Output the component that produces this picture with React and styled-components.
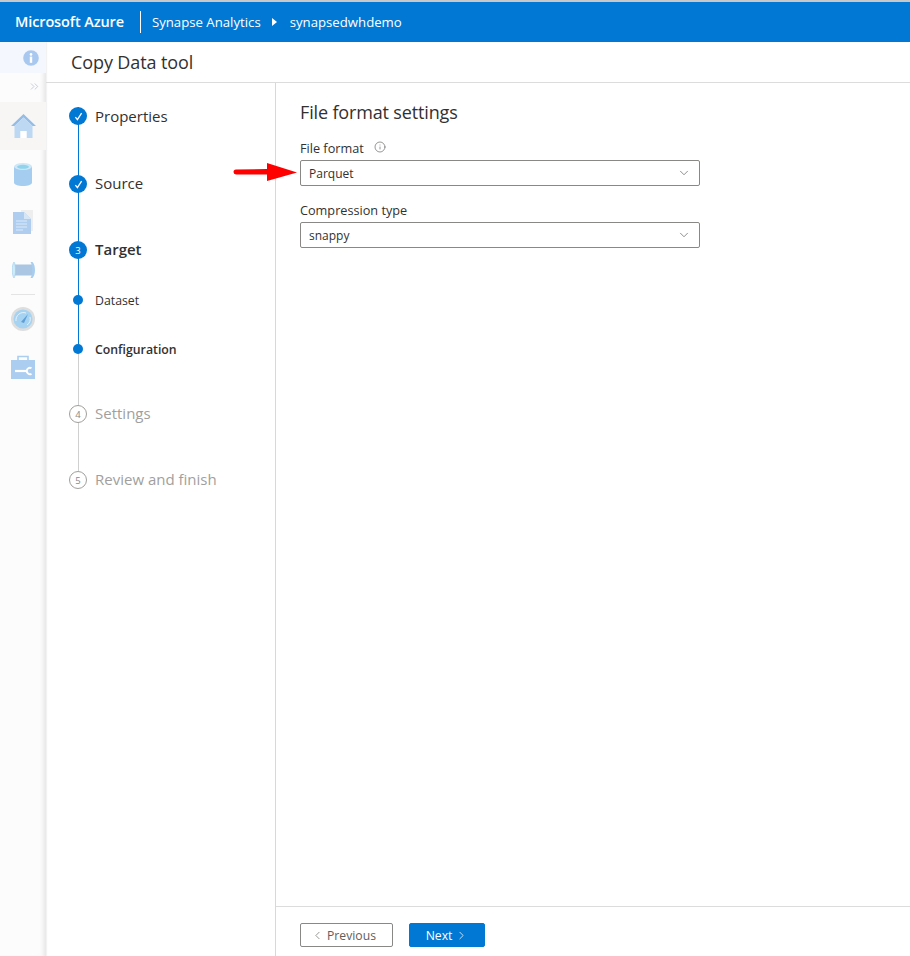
import React from 'react'
import styled, { createGlobalStyle } from 'styled-components'
import { ChevronDown, ChevronLeft, ChevronRight, ChevronsRight, Info } from 'lucide-react'

const GlobalStyle = createGlobalStyle`
    html, body {
        margin: 0;
        padding: 0;
        background: #fff;
    }
    body {
        font-family: "Open Sans", "Noto Sans", "Liberation Sans", sans-serif;
        color: #323130;
    }
    * { box-sizing: border-box; }
`

const Page = styled.div`
    width: 910px;
    height: 956px;
    display: flex;
    flex-direction: column;
    overflow: hidden;
    position: relative;
    border-top: 2px solid #c8c8c8;
`

const TopBar = styled.header`
    height: 40px;
    flex: none;
    background: #0078d4;
    color: #fff;
    display: flex;
    align-items: center;
    padding-left: 15px;
`

const Brand = styled.div`
    font-size: 14.5px;
    font-weight: 600;
    letter-spacing: -0.12px;
    padding-right: 16px;
    margin-right: 11px;
    height: 22px;
    line-height: 22px;
    border-right: 1px solid #fff;
`

const Crumb = styled.span`
    font-size: 13.2px;
`

const CrumbCaret = styled.span`
    width: 0;
    height: 0;
    margin: 0 13px 0 11px;
    border-left: 5px solid #fff;
    border-top: 4.5px solid transparent;
    border-bottom: 4.5px solid transparent;
`

const Body = styled.div`
    flex: 1;
    display: flex;
    min-height: 0;
`

const Rail = styled.nav`
    width: 46px;
    flex: none;
    background: #fcfcfc;
    display: flex;
    flex-direction: column;
    align-items: center;
    box-shadow: inset -5px 0 5px -3px rgba(0, 0, 0, .1), 1px 0 1px rgba(0, 0, 0, .05);
`

const RailInfo = styled.div`
    width: 100%;
    height: 31px;
    background: #f4f7fd;
    display: flex;
    justify-content: flex-end;
    align-items: center;
    padding: 0 7px 0 0;
`

const RailToggle = styled.div`
    width: 40px;
    height: 29px;
    margin-left: -2px;
    color: #a9b6c4;
    display: flex;
    justify-content: flex-end;
    padding: 7px 1px 0 0;
`

const RailItem = styled.div`
    width: 46px;
    height: 48px;
    flex: none;
    display: flex;
    align-items: center;
    justify-content: center;
    background: ${(props) => props.$bg || 'transparent'};
`

const RailDivider = styled.div`
    width: 24px;
    height: 1px;
    background: #e4e4e4;
    flex: none;
`

const Main = styled.main`
    flex: 1;
    display: flex;
    flex-direction: column;
    min-width: 0;
`

const TitleBar = styled.div`
    height: 41px;
    flex: none;
    border-bottom: 1px solid #dcdcdc;
    font-size: 18px;
    font-weight: 500;
    line-height: 41px;
    padding-left: 25px;
    letter-spacing: -0.1px;
`

const Columns = styled.div`
    flex: 1;
    display: flex;
    min-height: 0;
`

const Steps = styled.aside`
    width: 230px;
    flex: none;
    border-right: 1px solid #d8d8d8;
    padding: 24px 0 0 23px;
`

const Step = styled.div`
    height: ${(props) => props.$h}px;
    position: relative;
    display: flex;
    align-items: flex-start;

    &::after {
        content: '';
        display: ${(props) => (props.$last ? 'none' : 'block')};
        position: absolute;
        left: 9px;
        top: 0;
        bottom: 0;
        width: 1px;
        background: ${(props) => (props.$done ? '#0078d4' : '#d0d0d0')};
    }
`

const Marker = styled.span`
    width: 18px;
    height: 18px;
    flex: none;
    border-radius: 50%;
    position: relative;
    z-index: 1;
    display: flex;
    align-items: center;
    justify-content: center;
    font-size: 9.5px;
    color: ${(props) => (props.$idle ? '#8a8886' : '#fff')};
    background: ${(props) => (props.$idle ? '#fff' : '#0078d4')};
    border: ${(props) => (props.$idle ? '1px solid #a19f9d' : 'none')};
`

const Dot = styled.span`
    width: 10px;
    height: 10px;
    margin: 0 4px;
    flex: none;
    border-radius: 50%;
    background: #0078d4;
    position: relative;
    z-index: 1;
`

const StepLabel = styled.span`
    margin: ${(props) => (props.$sub ? '-4px 0 0 8px' : props.$first ? '0 0 0 8px' : '-1px 0 0 8px')};
    font-size: ${(props) => (props.$sub ? 12.3 : 15)}px;
    font-weight: ${(props) => (props.$strong ? 600 : 400)};
    color: ${(props) => (props.$idle ? '#a19f9d' : '#323130')};
    line-height: 19px;
    white-space: nowrap;
`

const Content = styled.section`
    flex: 1;
    display: flex;
    flex-direction: column;
    min-width: 0;
`

const Form = styled.div`
    flex: 1;
    padding: 17px 0 0 24px;
`

const Heading = styled.h2`
    margin: 0 0 15px;
    font-size: 18px;
    font-weight: 500;
    line-height: 24px;
    letter-spacing: -0.15px;
`

const Field = styled.div`
    width: 400px;
    margin-bottom: 15px;
`

const Label = styled.label`
    display: flex;
    align-items: center;
    height: 18px;
    margin-bottom: 3px;
    font-size: 12.7px;
    font-weight: 500;
    svg {
        margin: -3px 0 0 10px;
        color: #605e5c;
    }
`

const Select = styled.div`
    height: 26px;
    border: 1px solid #8a8886;
    border-radius: 2px;
    display: flex;
    align-items: center;
    justify-content: space-between;
    padding: 0 8px;
    font-size: 12px;
    svg {
        color: #605e5c;
    }
`

const Footer = styled.footer`
    height: 50px;
    flex: none;
    border-top: 1px solid #dcdcdc;
    display: flex;
    align-items: flex-start;
    gap: 16px;
    padding: 16px 0 0 24px;
`

const Button = styled.button`
    height: 24px;
    width: ${(props) => props.$w}px;
    border-radius: 2px;
    border: 1px solid ${(props) => (props.$primary ? '#0078d4' : '#8a8886')};
    background: ${(props) => (props.$primary ? '#0078d4' : '#fff')};
    color: ${(props) => (props.$primary ? '#fff' : '#605e5c')};
    font-family: inherit;
    font-size: 12.2px;
    display: flex;
    align-items: center;
    justify-content: center;
    gap: 3px;
    padding: 0 ${(props) => (props.$primary ? 0 : 6)}px 0 0;
`

const Arrow = styled.svg`
    position: absolute;
    left: 233px;
    top: 161px;
`

const Check = () => (
    <svg width="9" height="9" viewBox="0 0 9 9" fill="none">
        <path d="M1.4 5.2 3.4 7.6 7.6 1.2" stroke="#fff" strokeWidth="1.3" />
    </svg>
)

const InfoIcon = () => (
    <svg width="16" height="16" viewBox="0 0 16 16">
        <circle cx="8" cy="8" r="7.8" fill="#a9c8f0" />
        <circle cx="8" cy="4.4" r="1.3" fill="#fff" />
        <rect x="6.8" y="6.6" width="2.4" height="6.2" fill="#fff" />
    </svg>
)

const HomeIcon = () => (
    <svg width="25" height="24" viewBox="0 0 25 24">
        <path d="M12.500 0 25 12h-3.500L12.500 3.500 3.500 12H0z" fill="#93bde6" />
        <path d="M3.500 12l9-8.500 9 8.500v12h-6v-7h-6v7h-6z" fill="#bcd8f3" />
        <rect x="9.500" y="17" width="6" height="7" fill="#fff" />
    </svg>
)

const DbIcon = () => (
    <svg width="18" height="23" viewBox="0 0 18 23">
        <path d="M0 3.500v16c0 2 4 3.500 9 3.500s9-1.500 9-3.500v-16z" fill="#a5cdf0" />
        <ellipse cx="9" cy="3.500" rx="9" ry="3.500" fill="#cfe8f8" />
        <ellipse cx="9" cy="3.800" rx="6" ry="2" fill="#8fd4ec" />
    </svg>
)

const DocIcon = () => (
    <svg width="20" height="24" viewBox="0 0 20 24">
        <path d="M8 0h12v21H8z" fill="#eeeeee" />
        <path d="M0 2h11l7 7v15H0z" fill="#aecdef" />
        <path d="M11 2l7 7h-7z" fill="#d6e6f7" />
        <path d="M3 11h11M3 14h11M3 17h11M3 20h7" stroke="#dcebf9" strokeWidth="1" />
    </svg>
)

const PipeIcon = () => (
    <svg width="23" height="16" viewBox="0 0 23 16">
        <rect x="2" y="2.500" width="19" height="11" fill="#aac6e2" />
        <path d="M2 0C-.4 3-.4 13 2 16c2-3 2-13 0-16z" fill="#cdecf8" stroke="#9ccbec" strokeWidth=".6" />
        <path d="M18.500 0h2c3.300 3 3.300 13 0 16h-2c2.300-3 2.300-13 0-16z" fill="#a9cdef" />
    </svg>
)

const GaugeIcon = () => (
    <svg width="24" height="24" viewBox="0 0 24 24">
        <circle cx="12" cy="12" r="12" fill="#dedede" />
        <circle cx="12" cy="12" r="9.500" fill="#a6d3f1" />
        <path d="M5 14a7.500 7.500 0 0 1 10-8M19 10a7.500 7.500 0 0 1-3 8" fill="none" stroke="#e6f3fb" strokeWidth="1" />
        <path d="M10 15l7-8-4 9z" fill="#5f9fd6" />
    </svg>
)

const ToolboxIcon = () => (
    <svg width="24" height="24" viewBox="0 0 24 24">
        <path d="M7 5V1.500h10V5" fill="none" stroke="#abcdf0" strokeWidth="1.600" />
        <rect x="0" y="5" width="24" height="19" fill="#abcdf0" />
        <path d="M4 16h11" stroke="#fff" strokeWidth="2.200" />
        <path d="M20.500 13.200a3.200 3.200 0 1 0 0 5.600" fill="none" stroke="#fff" strokeWidth="2" />
    </svg>
)

const App = () => (
    <Page>
        <GlobalStyle />
        <TopBar>
            <Brand>Microsoft Azure</Brand>
            <Crumb>Synapse Analytics</Crumb>
            <CrumbCaret />
            <Crumb>synapsedwhdemo</Crumb>
        </TopBar>
        <Body>
            <Rail>
                <RailInfo><InfoIcon /></RailInfo>
                <RailToggle><ChevronsRight size={13} strokeWidth={1.2} /></RailToggle>
                <RailItem $bg="#f7f6f5"><HomeIcon /></RailItem>
                <RailItem><DbIcon /></RailItem>
                <RailItem><DocIcon /></RailItem>
                <RailItem><PipeIcon /></RailItem>
                <RailDivider />
                <RailItem><GaugeIcon /></RailItem>
                <RailItem><ToolboxIcon /></RailItem>
            </Rail>
            <Main>
                <TitleBar>Copy Data tool</TitleBar>
                <Columns>
                    <Steps>
                        <Step $h={68} $done>
                            <Marker><Check /></Marker>
                            <StepLabel $first>Properties</StepLabel>
                        </Step>
                        <Step $h={66} $done>
                            <Marker><Check /></Marker>
                            <StepLabel>Source</StepLabel>
                        </Step>
                        <Step $h={54} $done>
                            <Marker>3</Marker>
                            <StepLabel $strong>Target</StepLabel>
                        </Step>
                        <Step $h={49} $done>
                            <Dot />
                            <StepLabel $sub>Dataset</StepLabel>
                        </Step>
                        <Step $h={61}>
                            <Dot />
                            <StepLabel $sub $strong>Configuration</StepLabel>
                        </Step>
                        <Step $h={66}>
                            <Marker $idle>4</Marker>
                            <StepLabel $idle>Settings</StepLabel>
                        </Step>
                        <Step $h={40} $last>
                            <Marker $idle>5</Marker>
                            <StepLabel $idle>Review and finish</StepLabel>
                        </Step>
                    </Steps>
                    <Content>
                        <Form>
                            <Heading>File format settings</Heading>
                            <Field>
                                <Label>File format <Info size={12} strokeWidth={1.3} /></Label>
                                <Select>Parquet <ChevronDown size={14} strokeWidth={1.2} /></Select>
                            </Field>
                            <Field>
                                <Label>Compression type</Label>
                                <Select>snappy <ChevronDown size={14} strokeWidth={1.2} /></Select>
                            </Field>
                        </Form>
                        <Footer>
                            <Button $w={93}><ChevronLeft size={13} strokeWidth={1.2} />Previous</Button>
                            <Button $w={76} $primary>Next <ChevronRight size={13} strokeWidth={1.4} /></Button>
                        </Footer>
                    </Content>
                </Columns>
            </Main>
        </Body>
        <Arrow width="65" height="18" viewBox="0 0 65 18">
            <path d="M3 6.500 34 6 34 0 64 9.500 34 18 34 11.500 3 11.500a2.500 2.500 0 0 1 0-5z" fill="#ff0000" />
        </Arrow>
    </Page>
)

export default App
